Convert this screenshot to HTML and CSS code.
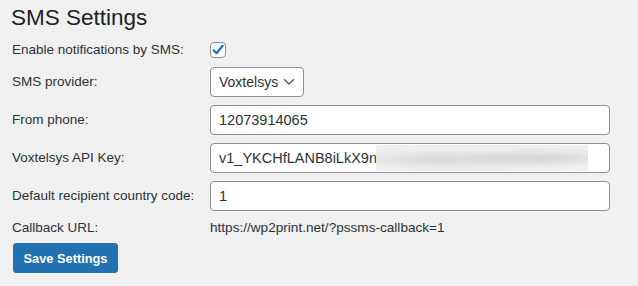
FILE: index.html
```html
<!DOCTYPE html>
<html>
<head>
<meta charset="utf-8">
<link rel="stylesheet" href="styles.css">
</head>
<body>
<div class="wrap">
  <h1 class="title">SMS Settings</h1>
  <div class="form">
    <div class="label">Enable notifications by SMS:</div>
    <div class="field">
      <span class="checkbox"><svg viewBox="0 0 16 16" width="16" height="16"><path d="M3.6 8.4 L6.6 11.2 L12.6 3.8" fill="none" stroke="#2271b1" stroke-width="2.2" stroke-linecap="round" stroke-linejoin="round"/></svg></span>
    </div>

    <div class="label">SMS provider:</div>
    <div class="field">
      <div class="select"><span>Voxtelsys</span><svg class="chev" viewBox="0 0 12 8" width="12" height="8"><path d="M1.5 1.8 L6 6 L10.5 1.8" fill="none" stroke="#50575e" stroke-width="1.4" stroke-linecap="round" stroke-linejoin="round"/></svg></div>
    </div>

    <div class="label">From phone:</div>
    <div class="field"><div class="input">12073914065</div></div>

    <div class="label">Voxtelsys API Key:</div>
    <div class="field"><div class="input secret">v1_YKCHfLANB8iLkX9nQ<span class="blur"></span></div></div>

    <div class="label">Default recipient country code:</div>
    <div class="field"><div class="input">1</div></div>

    <div class="label">Callback URL:</div>
    <div class="field value">https://wp2print.net/?pssms-callback=1</div>
  </div>
  <button class="btn">Save Settings</button>
</div>
</body>
</html>
```

FILE: styles.css
```css
html, body {
  margin: 0;
  padding: 0;
  background: #f0f0f1;
}
body {
  font-family: "Liberation Sans", Arial, sans-serif;
  color: #1d2327;
}
.wrap {
  padding: 0 12px;
}
.title {
  margin: 0;
  padding-top: 3px;
  font-size: 22.5px;
  line-height: 30px;
  font-weight: 400;
  color: #1d2327;
  margin-left: -1px;
}
.form {
  margin-top: 8px;
  display: grid;
  grid-template-columns: 198px 400px;
  row-gap: 8px;
  align-items: center;
}
.label {
  font-size: 13.5px;
  line-height: 18px;
  color: #2c3338;
}
.field {
  display: flex;
  align-items: center;
}
.value {
  font-size: 13.6px;
  line-height: 18px;
  color: #2c3338;
}
.checkbox {
  width: 14px;
  height: 14px;
  border: 1px solid #8c8f94;
  border-radius: 4px;
  background: #fff;
  position: relative;
  display: block;
}
.checkbox svg {
  position: absolute;
  left: -1px;
  top: -1px;
}
.select {
  box-sizing: border-box;
  width: 94px;
  height: 30px;
  border: 1px solid #8c8f94;
  border-radius: 4px;
  background: #fff;
  display: flex;
  align-items: center;
  justify-content: space-between;
  padding: 0 8px 0 8px;
  font-size: 14px;
  color: #2c3338;
}
.chev {
  display: block;
}
.input {
  box-sizing: border-box;
  width: 400px;
  height: 30px;
  border: 1px solid #8c8f94;
  border-radius: 4px;
  background: #fff;
  padding: 0 8px;
  font-size: 14.5px;
  line-height: 28px;
  color: #2c3338;
  position: relative;
  overflow: hidden;
  white-space: nowrap;
}
.blur {
  position: absolute;
  left: 165px;
  top: 1px;
  bottom: 1px;
  width: 212px;
  background:
    radial-gradient(ellipse 45% 40% at 30% 55%, rgba(200,200,200,0.55), rgba(200,200,200,0) 100%),
    radial-gradient(ellipse 40% 40% at 78% 50%, rgba(195,195,195,0.6), rgba(195,195,195,0) 100%),
    linear-gradient(90deg, #efefef, #ececec 50%, #f1f1f1 100%);
}
.btn {
  margin-top: 6px;
  display: block;
  box-sizing: border-box;
  width: 105px;
  height: 30px;
  border: 1px solid #2271b1;
  border-radius: 3px;
  background: #2271b1;
  color: #fff;
  font-family: "Liberation Sans", Arial, sans-serif;
  font-weight: 700;
  font-size: 12.8px;
  padding: 0;
  margin-left: 1px;
}
```
